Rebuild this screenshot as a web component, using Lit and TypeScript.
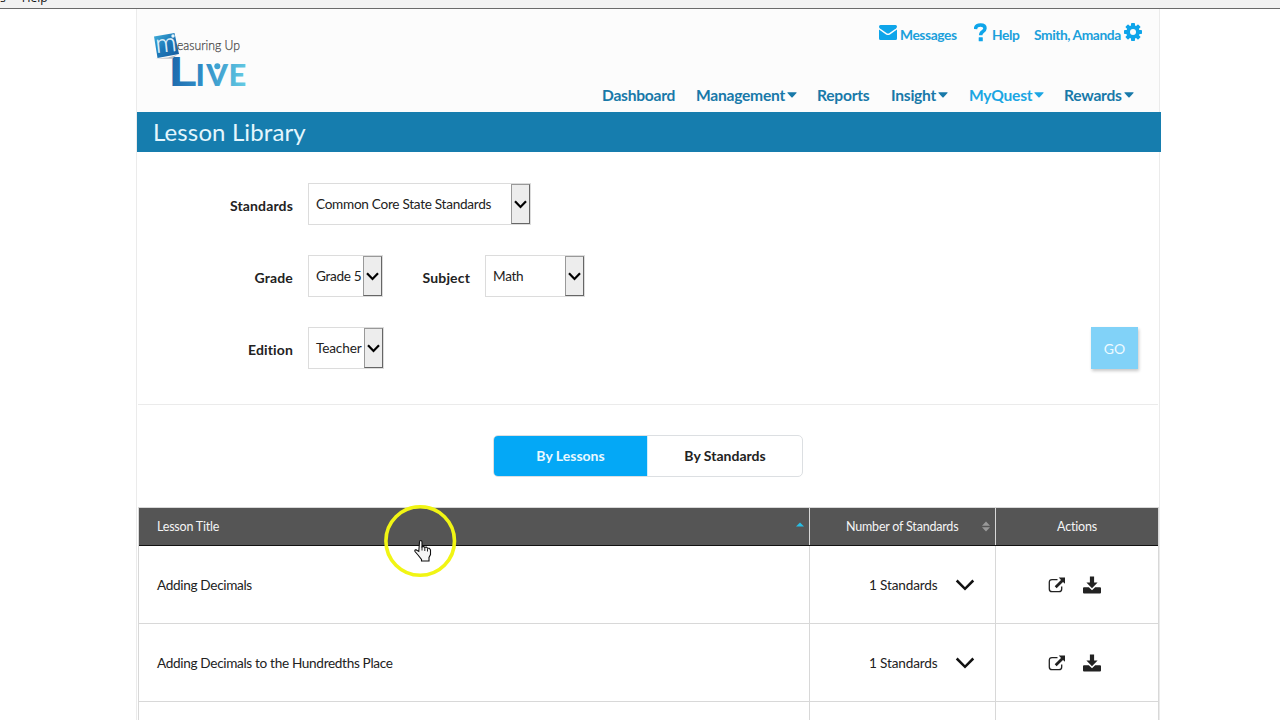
import { LitElement, html, css, svg } from "lit";
import { customElement, property } from "lit/decorators.js";
import { classMap } from "lit/directives/class-map.js";

const caret = html`<svg class="caret" width="10" height="6" viewBox="0 0 10 6"><path d="M0.9 0.3h8.2q.9 0 .4.8L5.6 5.3q-.6.6-1.2 0L.5 1.1Q0 .3.9.3z" fill="currentColor"/></svg>`;

@customElement("select-box")
class SelectBox extends LitElement {
  @property() value = "";
  static styles = css`
    :host { display: block; }
    .box { box-sizing: border-box; height: 42px; border: 1px solid #dcdcdc; background: #fff; display: flex; justify-content: space-between; overflow: hidden; }
    .value { padding-left: 7px; line-height: 40px; font-size: 13.6px; letter-spacing: var(--track, -0.28px); color: #222; white-space: nowrap; flex: 1; min-width: 0; }
    .arrow { box-sizing: border-box; width: 19px; height: 40px; border: 1px solid #666; border-top-color: #999; border-left-color: #999; background: #ededed; display: flex; align-items: center; justify-content: center; flex: none; }
  `;
  render() {
    return html`<div class="box"><span class="value">${this.value}</span><span class="arrow">
      <svg width="13" height="9" viewBox="0 0 13 9"><path d="M1 1.2L6.5 6.9L12 1.2" fill="none" stroke="#000" stroke-width="2.2"/></svg></span></div>`;
  }
}

@customElement("brand-logo")
class BrandLogo extends LitElement {
  static styles = css`
    :host { display: block; }
    svg { display: block; }
    .small { font: 300 14.5px Lato, sans-serif; }
    .m { font: 300 26px Lato, sans-serif; }
    .cap { font: 700 41px Lato, sans-serif; }
    .rest { font: 900 31px Lato, sans-serif; }
  `;
  render() {
    return html`<svg width="100" height="60" viewBox="150 30 100 60">
      <defs>
        <linearGradient id="tile" x1="0" y1="0" x2="1" y2="1"><stop offset="0" stop-color="#42b0da"/><stop offset=".5" stop-color="#1c78b8"/><stop offset="1" stop-color="#16599c"/></linearGradient>
        <linearGradient id="word" gradientUnits="userSpaceOnUse" x1="172" y1="60" x2="246" y2="72"><stop offset="0" stop-color="#1d68ac"/><stop offset=".45" stop-color="#318fc8"/><stop offset="1" stop-color="#62c8e2"/></linearGradient>
      </defs>
      ${svg`<text class="cap" x="168" y="86" textLength="28.500" lengthAdjust="spacingAndGlyphs" fill="url(#word)">L</text>
      <path d="M155 58.5L168 57.5L177 55L172 58.8z" fill="#b9bcc0"/>
      <path d="M154 36.5L174.5 33L179 54L157.5 58z" fill="url(#tile)"/>
      <text class="m" x="155.500" y="52" textLength="21" lengthAdjust="spacingAndGlyphs" transform="rotate(-6 166 46)" fill="#eaf6fc" stroke="#eaf6fc" stroke-width=".2">m</text>
      <circle cx="173" cy="36" r="1.700" fill="#e6f6fd"/>
      <text class="small" x="177" y="50" textLength="63" lengthAdjust="spacingAndGlyphs" fill="#444" stroke="#444" stroke-width=".25">easuring Up</text>
      <text class="rest" x="195.600 206.200 228.600" y="86" fill="url(#word)">IVE</text>
      <circle cx="217.300" cy="66.500" r="4.200" fill="#fcfcfc"/>
      <circle cx="217.300" cy="66.300" r="3" fill="#3fa3d1"/>`}
    </svg>`;
  }
}

@customElement("app-root")
class AppRoot extends LitElement {
  static styles = css`
    :host { display: block; position: relative; width: 1280px; height: 720px; overflow: hidden; background: #fff; font-family: Lato, sans-serif; color: #222; }
    * { box-sizing: border-box; }
    svg { display: block; flex: none; }
    .menubar { height: 9px; background: #f2f2f2; border-bottom: 1px solid #6a6a6a; overflow: hidden; }
    .menubar-items { display: flex; gap: 16px; margin-top: -10px; font: 12px/16px "Open Sans", sans-serif; color: #111; }
    .page { width: 1024px; height: 711px; margin-left: 136px; border: solid #ebebeb; border-width: 0 1px; }
    .header { height: 103px; background: #fcfcfc; display: flex; justify-content: space-between; padding: 0 17px 0 13px; }
    .logo { padding-top: 21px; }
    .header-right { display: flex; flex-direction: column; align-items: flex-end; }
    .links { display: flex; height: 45px; padding-top: 13px; color: #1ba0db; }
    .link { display: flex; align-items: flex-start; font-weight: 700; font-size: 13.8px; line-height: 26px; white-space: nowrap; letter-spacing: -0.42px; }
    .messages { width: 95px; gap: 3px; }
    .help { width: 60px; gap: 5px; }
    .user { width: 108px; justify-content: space-between; }
    .link svg { color: #0ea5ea; }
    .messages svg { margin-top: 3px; }
    .help svg, .user svg { margin-top: 1px; }
    .nav { display: grid; grid-template-columns: 94px 121px 74px 78px 95px 78px; margin-top: 30px; font-size: 15.6px; font-weight: 700; line-height: 22px; letter-spacing: -0.25px; color: #1879a9; }
    .nav-item { display: flex; align-items: center; gap: 2px; white-space: nowrap; }
    .nav-item.active { color: #1ba6e3; }
    .banner { width: 1024px; height: 40px; background: #167dae; color: #e4f6fd; font-size: 24px; line-height: 40px; padding-left: 16px; letter-spacing: 0.12px; }
    .filters { margin: 0 1px; height: 253px; border-bottom: 1px solid #ebebeb; padding: 31px 20px 0 19px; display: flex; flex-direction: column; gap: 30px; }
    .row { display: grid; grid-template-rows: 42px; grid-template-columns: 151px max-content 102px max-content; }
    .row label { font-size: 14px; font-weight: 700; text-align: right; padding-right: 15px; line-height: 46px; letter-spacing: 0.15px; }
    .w-standards { width: 223px; }
    .w-grade { width: 75px; --track: -0.33px; }
    .w-subject { width: 100px; }
    .w-edition { width: 76px; --track: -0.15px; }
    .last { display: flex; justify-content: space-between; }
    .go { width: 47px; height: 42px; background: #81d2f8; color: #eefaff; font-size: 14px; line-height: 44px; text-align: center; box-shadow: 1px 2px 3px rgba(0,0,0,.22); }
    .tabs { width: 310px; height: 42px; margin: 30px 0 30px 356px; display: grid; grid-template-columns: 154px 1fr; border: 1px solid #dcdfe2; border-radius: 5px; overflow: hidden; font-size: 14px; font-weight: 700; line-height: 40px; text-align: center; }
    .tab.on { background: #04a8f6; color: #e9f8ff; border-right: 1px solid #cfeefc; }
    .table { margin: 0 0 0 1px; border: 1px solid #d8d8d8; border-bottom: 0; }
    .tr { display: grid; grid-template-columns: 670px 186px 1fr; height: 78px; border-bottom: 1px solid #d8d8d8; font-size: 13.6px; letter-spacing: -0.33px; }
    .tr > div { display: flex; align-items: center; }
    .tr > div + div { border-left: 1px solid #d8d8d8; }
    .tr .title { padding-left: 18px; }
    .tr.head { height: 38px; background: #555; color: #f4f4f4; border-bottom-color: #111; font-size: 12.5px; letter-spacing: -0.2px; }
    .head .title { justify-content: space-between; padding-right: 5px; }
    .head .count { padding: 0 5px 0 36px; justify-content: space-between; }
    .head .actions { justify-content: center; }
    .head .up { margin-bottom: 5px; }
    .body .count { padding-left: 59px; gap: 17px; letter-spacing: -0.15px; }
    .body .actions { padding-left: 52px; gap: 17px; }
    .pointer { position: absolute; left: 383px; top: 504px; }
  `;

  lessons = ["Adding Decimals", "Adding Decimals to the Hundredths Place", ""];
  menu = [
    { name: "Dashboard" }, { name: "Management", more: true }, { name: "Reports" },
    { name: "Insight", more: true }, { name: "MyQuest", more: true, active: true }, { name: "Rewards", more: true },
  ];

  row(title: string) {
    return html`<div class="tr body">
      <div class="title">${title}</div>
      <div class="count">${title ? html`<span>1 Standards</span>
        <svg width="20" height="13" viewBox="0 0 20 13"><path d="M1.7 2.500L10 10.800L18.3 2.500" fill="none" stroke="#111" stroke-width="2.5"/></svg>` : ""}</div>
      <div class="actions">${title ? html`
        <svg width="18" height="16" viewBox="0 0 18 16"><path d="M9.5 2.6H4Q1.3 2.6 1.3 5.3V12Q1.3 14.7 4 14.7H11Q13.7 14.7 13.7 12V9.6" fill="none" stroke="#222" stroke-width="1.3"/><path d="M10.8 .6H17V6.8L15 4.9L8.6 11.2L6.7 9.3L13 3z" fill="#222"/></svg>
        <svg width="18" height="18" viewBox="0 0 18 18"><path d="M6.900 .5h4.200v6h3.500L9 12.200 3.400 6.500h3.500z" fill="#222"/><path d="M1 11.200h4.800L9 14.300l3.200-3.100H17q1 0 1 1v4.300q0 1-1 1H1q-1 0-1-1v-4.300q0-1 1-1z" fill="#222"/></svg>` : ""}</div>
    </div>`;
  }

  render() {
    return html`
      <div class="menubar"><div class="menubar-items"><span>s</span><span>Help</span></div></div>
      <div class="page">
        <div class="header">
          <brand-logo class="logo"></brand-logo>
          <div class="header-right">
            <div class="links">
              <div class="link messages"><svg width="18" height="15" viewBox="0 0 18 15"><path d="M1.500 0h15Q18 0 18 1.500q0 1.200-1 2L10.500 8Q9 9 7.500 8L1 3.500Q0 2.800 0 1.500 0 0 1.500 0z" fill="currentColor"/><path d="M0 4.600L7 9.400q2 1.200 4 0l7-4.800V13.500q0 1.500-1.500 1.500h-15Q0 15 0 13.500z" fill="currentColor"/></svg><span>Messages</span></div>
              <div class="link help"><svg width="13" height="19" viewBox="0 0 13 19"><path d="M1.500 6Q1.800 2 6.600 2q4.400 0 4.400 3.300 0 1.900-2.100 3.100Q6.700 9.700 6.700 12.200" fill="none" stroke="currentColor" stroke-width="3.500"/><rect x="4.700" y="14.200" width="4.100" height="4.100" rx=".5" fill="currentColor"/></svg><span>Help</span></div>
              <div class="link user"><span>Smith, Amanda</span><svg width="18" height="18" viewBox="-9 -9 18 18"><g fill="currentColor">${[0, 45, 90, 135].map(a => svg`<rect x="-2" y="-9" width="4" height="18" rx=".8" transform="rotate(${a})"/>`)}<circle r="6.800"/></g><circle r="3" fill="#fcfcfc"/></svg></div>
            </div>
            <div class="nav">${this.menu.map(m => html`<div class=${classMap({ "nav-item": true, active: !!m.active })}><span>${m.name}</span>${m.more ? caret : ""}</div>`)}</div>
          </div>
        </div>
        <div class="banner">Lesson Library</div>
        <div class="filters">
          <div class="row"><label>Standards</label><select-box class="w-standards" value="Common Core State Standards"></select-box></div>
          <div class="row"><label>Grade</label><select-box class="w-grade" value="Grade 5"></select-box><label>Subject</label><select-box class="w-subject" value="Math"></select-box></div>
          <div class="last"><div class="row"><label>Edition</label><select-box class="w-edition" value="Teacher"></select-box></div><div class="go">GO</div></div>
        </div>
        <div class="tabs"><div class="tab on">By Lessons</div><div class="tab">By Standards</div></div>
        <div class="table">
          <div class="tr head">
            <div class="title"><span>Lesson Title</span><svg class="up" width="8" height="5" viewBox="0 0 8 5"><path d="M0 4.500L4 .5L8 4.500z" fill="#27bfe6"/></svg></div>
            <div class="count"><span>Number of Standards</span><svg width="8" height="11" viewBox="0 0 8 11"><path d="M0 4.700L4 .5L8 4.700zM0 6.300H8L4 10.500z" fill="#999"/></svg></div>
            <div class="actions"><span>Actions</span></div>
          </div>
          ${this.lessons.map(l => this.row(l))}
        </div>
      </div>
      <svg class="pointer" width="74" height="74" viewBox="383 504 74 74">
        <circle cx="420.200" cy="541" r="34.300" fill="none" stroke="#f1f514" stroke-width="3.600"/>
        <path d="M419.500 542q0-1.500 1.200-1.500t1.300 1.500v5l1.600-.6 1.200 1 1.700-.4 1 1.200 1.800.1 1.200 1.700v4.500l-1.500 3v3.500h-7.500v-1.500l-3.500-4.500-3-3.500q-.6-1.500.8-1.800l3 1.700z" fill="#f6f6f6" stroke="#111" stroke-width="1.100"/>
        <path d="M422 546.500v4M424.800 547.500v3.500M427.500 548.500v3" stroke="#222" stroke-width="1"/>
      </svg>`;
  }
}
